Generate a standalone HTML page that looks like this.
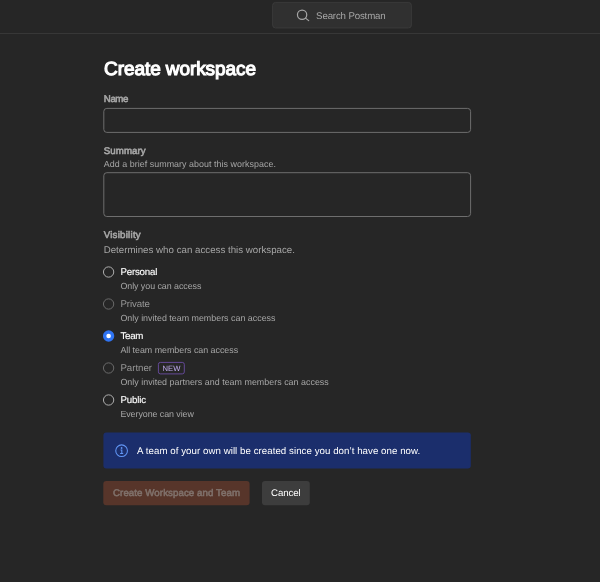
<!DOCTYPE html>
<html><head><meta charset="utf-8">
<style>
*{box-sizing:border-box;margin:0;padding:0}
html,body{width:600px;height:582px;overflow:hidden;background:#262626;font-family:"Liberation Sans",sans-serif;color:#fff}
.t{text-rendering:geometricPrecision;position:absolute;white-space:nowrap;line-height:14px;font-weight:400}
</style></head><body>
<div id="wrap" style="position:absolute;left:0;top:0;width:600px;height:582px;will-change:transform">
<svg style="position:absolute;left:0;top:0" width="600" height="582" viewBox="0 0 600 582" fill="none">
<rect x="0" y="33" width="600" height="0.8" fill="#3d3d3d"/>
<rect x="272.6" y="2.4" width="138.8" height="25.6" rx="3" fill="#303030" stroke="#3d3d3d" stroke-width="0.8"/>
<g stroke="#a6a6a6" stroke-width="1.2" stroke-linecap="round"><circle cx="302.1" cy="14.8" r="4.65"/><path d="M305.5 18.1L308.7 20.6"/></g>
<rect x="103.8" y="108.4" width="366.8" height="24" rx="3" stroke="#727272" stroke-width="0.95"/>
<rect x="103.8" y="172.7" width="366.8" height="43.8" rx="3" stroke="#727272" stroke-width="0.95"/>
<circle cx="108.6" cy="272" r="5.15" stroke="#b4b4b4" stroke-width="0.95"/>
<circle cx="108.6" cy="304" r="5.15" stroke="#6e6e6e" stroke-width="0.95"/>
<circle cx="108.6" cy="336" r="5.65" fill="#2f74f3"/>
<circle cx="108.6" cy="336" r="2.3" fill="#ffffff"/>
<circle cx="108.6" cy="368" r="5.15" stroke="#6e6e6e" stroke-width="0.95"/>
<circle cx="108.6" cy="400" r="5.15" stroke="#b4b4b4" stroke-width="0.95"/>
<rect x="158.4" y="362.4" width="25.9" height="11.5" rx="2" stroke="#7050ac" stroke-width="0.85"/>
<rect x="103.4" y="432.6" width="367.4" height="35.8" rx="3" fill="#1b2e6c"/>
<g stroke="#6196f5" stroke-width="1.05"><circle cx="121.6" cy="450.7" r="5.85"/><path d="M120.5 450h1.3v3.4M120.1 453.5h3.1" stroke-width="1.1"/></g><circle cx="121.6" cy="448" r="0.9" fill="#6196f5"/>
<rect x="103.3" y="480.9" width="146.3" height="24.4" rx="3" fill="#57352a"/>
<rect x="262" y="480.9" width="47.8" height="24.4" rx="3" fill="#3d3d3d"/>
</svg>
<div class="t" style="left:104.1px;top:63.00px;font-size:19.0px;letter-spacing:-0.082px;color:#ffffff;-webkit-text-stroke:1.14px #ffffff">Create workspace</div>
<div class="t" style="left:103.8px;top:93.00px;font-size:9.7px;letter-spacing:-0.415px;color:#a6a6a6;-webkit-text-stroke:0.58px #a6a6a6">Name</div>
<div class="t" style="left:103.7px;top:145.00px;font-size:9.7px;letter-spacing:0.091px;color:#a6a6a6;-webkit-text-stroke:0.58px #a6a6a6">Summary</div>
<div class="t" style="left:103.7px;top:157.00px;font-size:8.9px;letter-spacing:0.053px;color:#a6a6a6">Add a brief summary about this workspace.</div>
<div class="t" style="left:103.7px;top:229.00px;font-size:9.7px;letter-spacing:0.241px;color:#a6a6a6;-webkit-text-stroke:0.58px #a6a6a6">Visibility</div>
<div class="t" style="left:103.7px;top:244.00px;font-size:9.7px;letter-spacing:0.017px;color:#a6a6a6">Determines who can access this workspace.</div>
<div class="t" style="left:120.4px;top:266.00px;font-size:9.7px;letter-spacing:-0.179px;color:#ffffff;-webkit-text-stroke:0.12px #ffffff">Personal</div>
<div class="t" style="left:120.4px;top:279.00px;font-size:8.9px;letter-spacing:-0.049px;color:#a6a6a6">Only you can access</div>
<div class="t" style="left:120.4px;top:298.00px;font-size:9.7px;letter-spacing:-0.093px;color:#989898">Private</div>
<div class="t" style="left:120.4px;top:311.00px;font-size:8.9px;letter-spacing:0.006px;color:#a6a6a6">Only invited team members can access</div>
<div class="t" style="left:120.4px;top:330.00px;font-size:9.7px;letter-spacing:-0.234px;color:#ffffff;-webkit-text-stroke:0.12px #ffffff">Team</div>
<div class="t" style="left:120.4px;top:343.00px;font-size:8.9px;letter-spacing:-0.026px;color:#a6a6a6">All team members can access</div>
<div class="t" style="left:120.4px;top:362.00px;font-size:9.7px;letter-spacing:-0.030px;color:#989898">Partner</div>
<div class="t" style="left:162.5px;top:362.00px;font-size:7.6px;letter-spacing:0.041px;color:#c2adf0">NEW</div>
<div class="t" style="left:120.4px;top:375.00px;font-size:8.9px;letter-spacing:0.025px;color:#a6a6a6">Only invited partners and team members can access</div>
<div class="t" style="left:120.4px;top:394.00px;font-size:9.7px;letter-spacing:-0.158px;color:#ffffff;-webkit-text-stroke:0.12px #ffffff">Public</div>
<div class="t" style="left:120.4px;top:407.00px;font-size:8.9px;letter-spacing:-0.062px;color:#a6a6a6">Everyone can view</div>
<div class="t" style="left:137.1px;top:445.00px;font-size:9.7px;letter-spacing:0.049px;color:#ffffff">A team of your own will be created since you don’t have one now.</div>
<div class="t" style="left:113.0px;top:487.00px;font-size:9.7px;letter-spacing:0.079px;color:#7f706a;-webkit-text-stroke:0.58px #7f706a">Create Workspace and Team</div>
<div class="t" style="left:271.1px;top:487.00px;font-size:9.7px;letter-spacing:-0.131px;color:#ffffff">Cancel</div>
<div class="t" style="left:316.1px;top:10.00px;font-size:9.7px;letter-spacing:-0.156px;color:#a6a6a6">Search Postman</div>
</div>
</body></html>
